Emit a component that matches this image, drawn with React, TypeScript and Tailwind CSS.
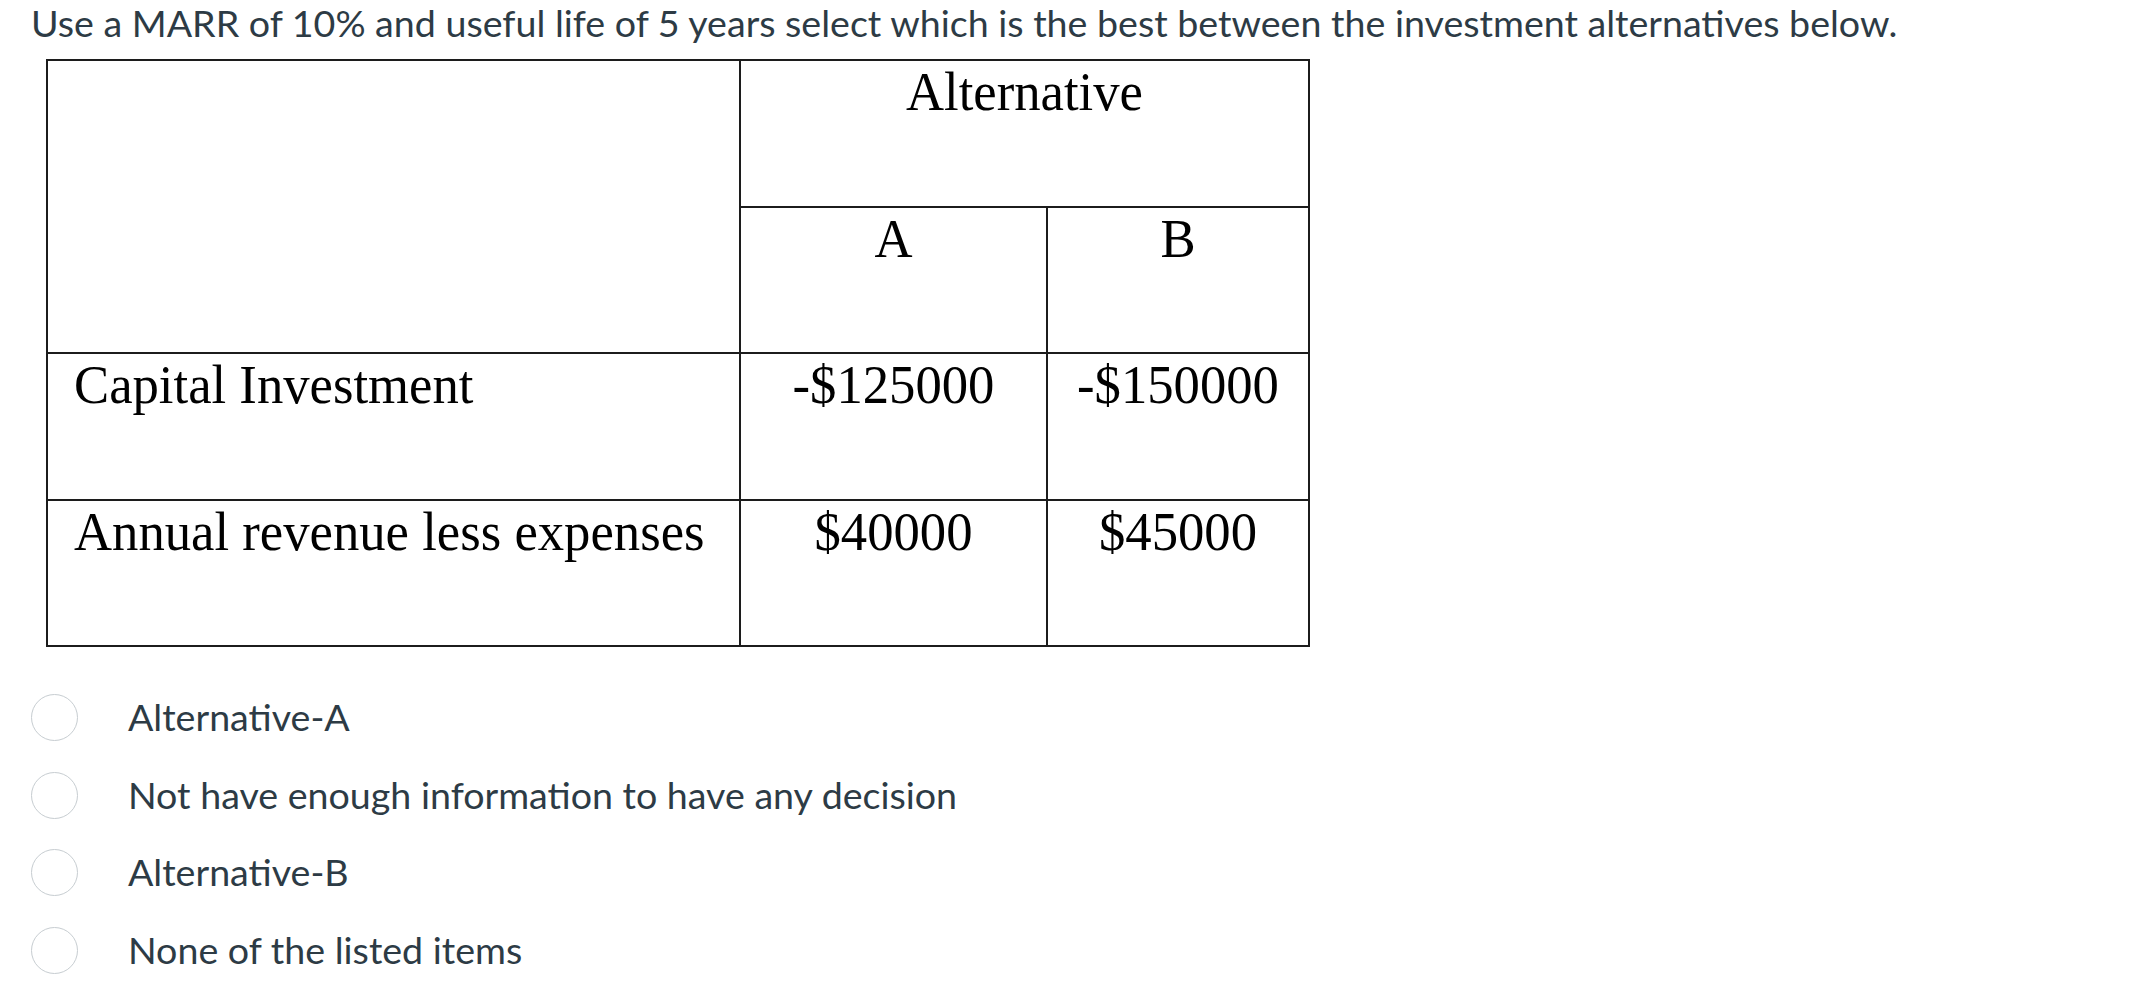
import React from "react";

const options = [
  "Alternative-A",
  "Not have enough information to have any decision",
  "Alternative-B",
  "None of the listed items",
];

const cell = "border-2 border-[#1c1c1c] align-top pt-0";

const App: React.FC = () => {
  return (
    <div className="w-screen min-h-screen bg-white text-[#2d3b45] font-['Lato',sans-serif]">
      <p className="pl-[31px] text-[37.6px] leading-[normal]">
        Use a MARR of 10% and useful life of 5 years select which is the best between the investment alternatives below.
      </p>
      <table className="ml-[46px] mt-[14px] w-[1262px] table-fixed border-collapse text-black font-['Liberation_Serif','Times_New_Roman',serif] text-[52.7px] leading-[normal]">
        <colgroup>
          <col className="w-[693px]" />
          <col className="w-[307px]" />
          <col className="w-[262px]" />
        </colgroup>
        <tbody>
          <tr className="h-[147px]">
            <td rowSpan={2} className={cell}></td>
            <td colSpan={2} className={`${cell} text-center`}>
              <span className="inline-block scale-y-[1.06]">Alternative</span>
            </td>
          </tr>
          <tr className="h-[146px]">
            <td className={`${cell} text-center`}>
              <span className="inline-block scale-y-[1.06]">A</span>
            </td>
            <td className={`${cell} text-center`}>
              <span className="inline-block scale-y-[1.06]">B</span>
            </td>
          </tr>
          <tr className="h-[147px]">
            <td className={`${cell} pl-[26px]`}>
              <span className="inline-block scale-y-[1.06]">Capital Investment</span>
            </td>
            <td className={`${cell} text-center`}>
              <span className="inline-block scale-y-[1.06]">-$125000</span>
            </td>
            <td className={`${cell} text-center`}>
              <span className="inline-block scale-y-[1.06]">-$150000</span>
            </td>
          </tr>
          <tr className="h-[146px]">
            <td className={`${cell} pl-[26px]`}>
              <span className="inline-block scale-y-[1.06]">Annual revenue less expenses</span>
            </td>
            <td className={`${cell} text-center`}>
              <span className="inline-block scale-y-[1.06]">$40000</span>
            </td>
            <td className={`${cell} text-center`}>
              <span className="inline-block scale-y-[1.06]">$45000</span>
            </td>
          </tr>
        </tbody>
      </table>
      <div className="mt-[32px] flex flex-col">
        {options.map((o) => (
          <label key={o} className="flex h-[77.5px] items-center">
            <span className="ml-[31px] h-[47px] w-[47px] shrink-0 rounded-full border-[1.5px] border-[#c7cdd1] bg-white" />
            <span className="ml-[50px] -mt-[2px] text-[37.6px] leading-[normal]">{o}</span>
          </label>
        ))}
      </div>
    </div>
  );
};

export default App;
